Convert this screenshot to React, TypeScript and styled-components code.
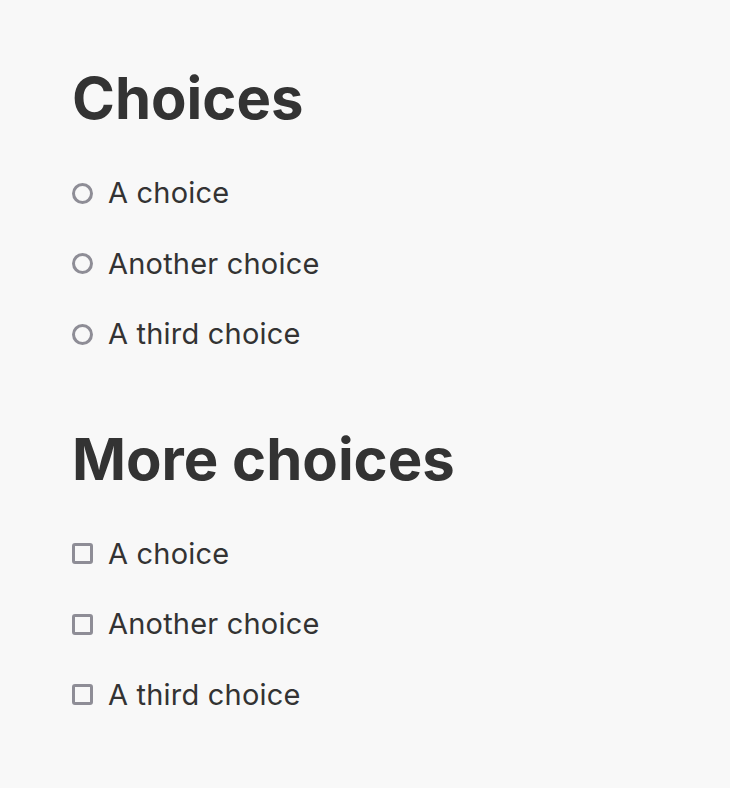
import React, { useState } from 'react';
import styled, { createGlobalStyle } from 'styled-components';

const GlobalStyle = createGlobalStyle`
  html, body {
    margin: 0;
    padding: 0;
    background: #f8f8f8;
  }

  body {
    font-family: Inter, "Noto Sans", sans-serif;
    color: #333333;
  }
`;

const items = ['A choice', 'Another choice', 'A third choice'];

const App = () => {
  const [radio, setRadio] = useState('');
  const [checked, setChecked] = useState<string[]>([]);

  return (
    <Page>
      <GlobalStyle />
      <Section>
        <Title>Choices</Title>
        <List>
          {items.map((item) => (
            <Row key={item}>
              <Radio
                type="radio"
                name="choices"
                checked={radio === item}
                onChange={() => setRadio(item)}
              />
              <Label>{item}</Label>
            </Row>
          ))}
        </List>
      </Section>
      <Section>
        <Title>More choices</Title>
        <List>
          {items.map((item) => (
            <Row key={item}>
              <Check
                type="checkbox"
                checked={checked.includes(item)}
                onChange={() =>
                  setChecked((prev) =>
                    prev.includes(item) ? prev.filter((i) => i !== item) : [...prev, item]
                  )
                }
              />
              <Label>{item}</Label>
            </Row>
          ))}
        </List>
      </Section>
    </Page>
  );
};

export default App;

// css

const Page = styled.div`
  display: flex;
  flex-direction: column;
  gap: 50px;
  padding: 59px 72px 40px;
`;

const Section = styled.section`
  display: flex;
  flex-direction: column;
`;

const Title = styled.h2`
  margin: 0 0 21px;

  font-weight: 700;
  font-size: 58px;
  line-height: 78px;
  letter-spacing: 0;
  color: #333333;
`;

const List = styled.div`
  display: flex;
  flex-direction: column;
`;

const Row = styled.label`
  display: flex;
  align-items: center;
  gap: 15px;
  height: 70.5px;
  cursor: pointer;
`;

const Box = styled.input`
  appearance: none;
  flex: none;
  box-sizing: border-box;
  width: 21px;
  height: 21px;
  margin: 0;

  border: 3px solid #8e8d96;
  background: transparent;

  :checked {
    background: #8e8d96;
  }
`;

const Radio = styled(Box)`
  border-radius: 50%;
`;

const Check = styled(Box)`
  border-radius: 3px;
`;

const Label = styled.span`
  font-size: 29px;
  line-height: 34px;
  letter-spacing: 0.2px;
  color: #333333;
`;
